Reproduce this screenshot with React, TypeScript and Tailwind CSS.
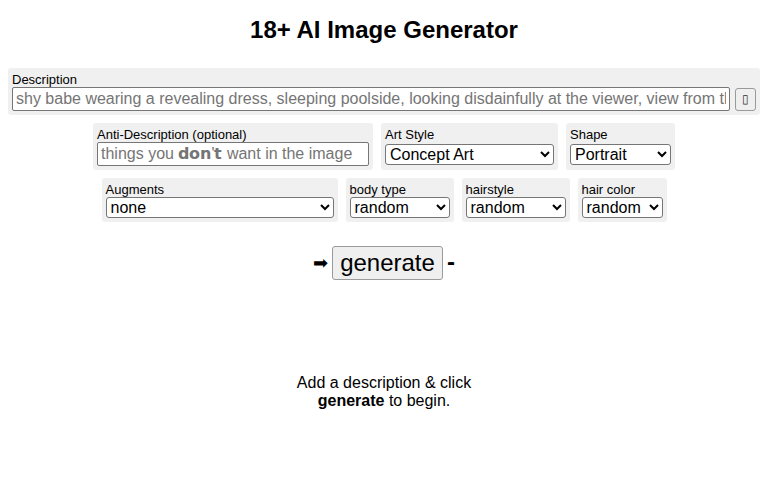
import React from 'react'

const font = { fontFamily: '"Liberation Sans", Arial, sans-serif' }

const selectCls =
  'h-[21px] border border-[#767676] rounded-[3px] bg-white text-[16px] leading-[19px] text-black pl-0'

function Field({ label, children }: { label: string; children: React.ReactNode }) {
  return (
    <div className="flex flex-col bg-[#f0f0f0] rounded-[3px] p-1">
      <label className="text-[13px] leading-[15px] text-black">{label}</label>
      {children}
    </div>
  )
}

function Pick({ value, width }: { value: string; width: string }) {
  return (
    <select className={`${selectCls} ${width}`} defaultValue={value}>
      <option>{value}</option>
    </select>
  )
}

export default function App() {
  return (
    <div className="min-h-[480px] bg-white text-black" style={font}>
      <h1 className="pt-4 text-center text-[24px] leading-[28px] font-bold">18+ AI Image Generator</h1>

      {/* Description */}
      <div className="mx-2 mt-6 bg-[#f0f0f0] rounded-[3px] p-1">
        <label className="block text-[13px] leading-[15px]">Description</label>
        <div className="flex items-center gap-[5px]">
          <input
            className="w-[718px] h-[24px] border border-[#767676] rounded-[2px] bg-white px-[3px] text-[16px] placeholder:text-[#757575]"
            placeholder="shy babe wearing a revealing dress, sleeping poolside, looking disdainfully at the viewer, view from the side"
          />
          <button className="w-[21px] h-[23px] border border-[#9a9a9a] rounded-[3px] bg-[#efefef] text-[12px] leading-none text-[#333]">
            ▯
          </button>
        </div>
      </div>

      {/* Row 2 */}
      <div className="mt-2 flex justify-center gap-2">
        <Field label="Anti-Description (optional)">
          <input
            className="w-[272px] h-[24px] border border-[#767676] rounded-[2px] bg-white px-[3px] text-[16px] placeholder:text-[#757575]"
            placeholder="things you 𝗱𝗼𝗻'𝘁 want in the image"
          />
        </Field>
        <Field label="Art Style">
          <div className="flex items-center h-[24px]">
            <Pick value="Concept Art" width="w-[169px]" />
          </div>
        </Field>
        <Field label="Shape">
          <div className="flex items-center h-[24px]">
            <Pick value="Portrait" width="w-[101px]" />
          </div>
        </Field>
      </div>

      {/* Row 3 */}
      <div className="mt-2 flex justify-center gap-2">
        <Field label="Augments">
          <Pick value="none" width="w-[228px]" />
        </Field>
        <Field label="body type">
          <Pick value="random" width="w-[100px]" />
        </Field>
        <Field label="hairstyle">
          <Pick value="random" width="w-[100px]" />
        </Field>
        <Field label="hair color">
          <Pick value="random" width="w-[81px]" />
        </Field>
      </div>

      {/* Generate */}
      <div className="mt-6 flex justify-center items-center gap-[4px] text-[24px] leading-[28px]">
        <span className="text-[18px]">➡</span>
        <button className="h-[34px] px-[7px] border border-[#9a9a9a] rounded-[3px] bg-[#efefef] text-[24px] leading-[28px]">
          generate
        </button>
        <span className="font-bold -mt-[3px]">-</span>
      </div>

      <p className="mt-[94px] text-center text-[16px] leading-[18px]">
        Add a description &amp; click
        <br />
        <b>generate</b> to begin.
      </p>
    </div>
  )
}
